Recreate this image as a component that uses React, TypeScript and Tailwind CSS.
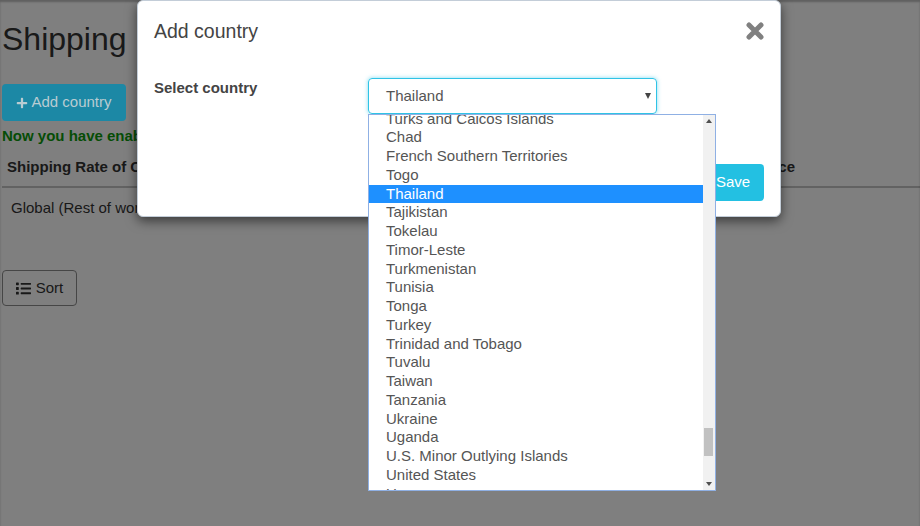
import React from 'react';
import { FaList, FaPlus } from 'react-icons/fa';

const countries = [
  'Turks and Caicos Islands', 'Chad', 'French Southern Territories', 'Togo', 'Thailand', 'Tajikistan', 'Tokelau',
  'Timor-Leste', 'Turkmenistan', 'Tunisia', 'Tonga', 'Turkey', 'Trinidad and Tobago', 'Tuvalu', 'Taiwan', 'Tanzania',
  'Ukraine', 'Uganda', 'U.S. Minor Outlying Islands', 'United States', 'Uruguay',
];

const App: React.FC = () => {
  return (
    <div className="relative h-[526px] w-[920px] overflow-hidden bg-white font-['Liberation_Sans',Arial,sans-serif] text-[#333]">
      {/* page behind the modal */}
      <div className="pt-[19px] pl-[2px]">
        <h1 className="text-[32px] leading-[40px] text-[#333]">Shipping</h1>
        <button className="relative z-10 mt-[25px] flex h-[37px] w-[124px] items-center justify-center gap-[3px] rounded bg-[#1c88a5] text-[15px] text-[#b9ccd2]">
          <FaPlus className="text-[12px]" /> Add country
        </button>
        <p className="mt-[6px] text-[15px] leading-[18px] font-bold text-[#0b9a0b]">Now you have enabled</p>
        <div className="mt-[3px] flex h-[40px] items-center justify-between border-b-2 border-[#c4c4c4] px-[5px] text-[15px] font-bold">
          <span>Shipping Rate of Country</span>
          <span className="mr-[120px]">Price</span>
        </div>
        <p className="mt-[10px] pl-[9px] text-[15px] leading-[20px]">Global (Rest of world)</p>
        <button className="mt-[52px] flex h-[36px] w-[75px] items-center justify-center gap-[5px] rounded border border-[#8c8c8c] text-[15px]">
          <FaList className="text-[15px]" /> Sort
        </button>
      </div>

      {/* backdrop */}
      <div className="absolute inset-0 bg-black/50 shadow-[inset_0_2px_2px_rgba(0,0,0,0.25)]" />

      {/* modal */}
      <div className="absolute top-0 left-[137px] h-[217px] w-[644px] rounded-md border border-[#c3cdd8] bg-white shadow-[0_4px_12px_rgba(0,0,0,0.55)]">
        <div className="flex items-center justify-between pt-[17px] pr-[16px] pl-[16px]">
          <h4 className="text-[19.5px] leading-[26px] text-[#444]">Add country</h4>
          <svg viewBox="0 0 18 18" className="h-[18px] w-[18px]">
            <path d="M3 3 L15 15 M15 3 L3 15" stroke="#808080" strokeWidth="5" strokeLinecap="round" />
          </svg>
        </div>
        <div className="mt-[35px] flex pl-[16px]">
          <label className="-mt-[1px] w-[214px] text-[15px] leading-[20px] font-bold text-[#444]">Select country</label>
          <div className="-mt-[1px] flex h-[36px] w-[289px] items-center justify-between rounded border border-[#2fc3e6] pr-[4px] pl-[17px] text-[15px] text-[#555] shadow-[0_0_4px_rgba(47,195,230,0.6)]">
            <span>Thailand</span>
            <span className="mr-[1px] h-0 w-0 border-x-[3px] border-t-[6px] border-x-transparent border-t-[#444]" />
          </div>
        </div>
        <button className="absolute top-[163px] right-[16px] h-[37px] w-[66px] rounded bg-[#23c0e2] pl-[4px] text-[15px] text-white">Save</button>
      </div>

      {/* open select list */}
      <div className="absolute top-[114px] left-[368px] flex h-[377px] w-[348px] overflow-hidden border border-[#8fb0e4] bg-white text-[15px] text-[#555]">
        <div className="h-full flex-1 overflow-hidden">
          <div className="-mt-[5.5px]">
            {countries.map((name) => (
              <div key={name} className={`h-[18.75px] pl-[17px] leading-[18.75px] ${name === 'Thailand' ? 'bg-[#1e90ff] text-white' : ''}`}>{name}</div>
            ))}
          </div>
        </div>
        <div className="relative w-[12px] bg-[#f1f1f1]">
          <span className="absolute top-[4px] left-[3px] h-0 w-0 border-x-[3px] border-b-[4px] border-x-transparent border-b-[#505050]" />
          <span className="absolute top-[313px] left-[1px] h-[28px] w-[9px] bg-[#c1c1c1]" />
          <span className="absolute bottom-[4px] left-[3px] h-0 w-0 border-x-[3px] border-t-[4px] border-x-transparent border-t-[#505050]" />
        </div>
      </div>
    </div>
  );
};

export default App;
